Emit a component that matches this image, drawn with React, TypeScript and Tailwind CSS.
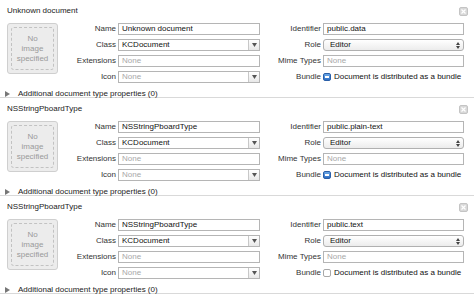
import React from "react";

const font = { fontFamily: '"Liberation Sans", Arial, sans-serif' };

function Field({ value, placeholder }: { value?: string; placeholder?: string }) {
  return (
    <div className="h-[12px] w-full border border-[#b5b5b5] bg-white flex items-center pl-[3px] text-[8px] leading-none whitespace-nowrap">
      {value ? <span className="text-[#111]">{value}</span> : <span className="text-[#a8a8a8]">{placeholder}</span>}
    </div>
  );
}

function Combo({ value, placeholder }: { value?: string; placeholder?: string }) {
  return (
    <div className="h-[12px] w-full border border-[#b5b5b5] bg-white flex items-stretch text-[8px] leading-none whitespace-nowrap">
      <div className="flex-1 flex items-center pl-[3px]">
        {value ? <span className="text-[#111]">{value}</span> : <span className="text-[#a8a8a8]">{placeholder}</span>}
      </div>
      <div className="w-[11px] border-l border-[#c8c8c8] bg-gradient-to-b from-white to-[#e8e8e8] flex items-center justify-center">
        <svg width="5" height="4" viewBox="0 0 5 4"><path d="M0 0 L5 0 L2.5 4 Z" fill="#555" /></svg>
      </div>
    </div>
  );
}

function Popup({ value }: { value: string }) {
  return (
    <div className="h-[12px] w-full border border-[#b0b0b0] rounded-[3px] bg-gradient-to-b from-white to-[#ececec] flex items-center justify-between pl-[6px] pr-[3px] text-[8px] leading-none">
      <span className="text-[#111]">{value}</span>
      <svg width="4" height="7" viewBox="0 0 4 7"><path d="M0 3 L2 0 L4 3 Z M0 4 L2 7 L4 4 Z" fill="#444" /></svg>
    </div>
  );
}

function Label({ children }: { children: React.ReactNode }) {
  return <div className="text-right text-[8px] leading-none text-[#333] whitespace-nowrap">{children}</div>;
}

function Section({ title, name, identifier, checked }: { title: string; name: string; identifier: string; checked: boolean }) {
  return (
    <div className="relative h-[98px] border-b border-[#d9d9d9] bg-white">
      <div className="absolute right-[6px] top-[7px] w-[9px] h-[9px] rounded-[2px] bg-[#d8d8d8] border border-[#c4c4c4] flex items-center justify-center">
        <svg width="5" height="5" viewBox="0 0 5 5"><path d="M0.5 0.5 L4.5 4.5 M4.5 0.5 L0.5 4.5" stroke="#fff" strokeWidth="1.2" /></svg>
      </div>
      <div className="pl-[7px] pt-[6px] h-[23px] text-[8px] leading-[9px] text-[#222]">{title}</div>
      <div className="flex">
        <div className="ml-[7px] w-[51px] h-[51px] rounded-[3px] border border-[#cfcfcf] bg-[#ececec] p-[3px]">
          <div className="w-full h-full rounded-[3px] border border-dashed border-[#c2c2c2] flex items-center justify-center text-center text-[8px] leading-[10px] text-[#9a9a9a]">
            No<br />image<br />specified
          </div>
        </div>
        <div className="grid grid-cols-[58px_142px] gap-x-[2px] gap-y-[4px] items-center">
          <Label>Name</Label>
          <Field value={name} />
          <Label>Class</Label>
          <Combo value="KCDocument" />
          <Label>Extensions</Label>
          <Field placeholder="None" />
          <Label>Icon</Label>
          <Combo placeholder="None" />
        </div>
        <div className="grid grid-cols-[61px_141px] gap-x-[2px] gap-y-[4px] items-center content-start">
          <Label>Identifier</Label>
          <Field value={identifier} />
          <Label>Role</Label>
          <Popup value="Editor" />
          <Label>Mime Types</Label>
          <Field placeholder="None" />
          <Label>Bundle</Label>
          <div className="flex items-center gap-[3px] h-[12px] text-[8px] leading-none text-[#111] whitespace-nowrap">
            {checked ? (
              <div className="w-[8px] h-[8px] shrink-0 rounded-[2px] bg-gradient-to-b from-[#6aa8e8] to-[#2f6fc4] border border-[#2a5fa8] flex items-center justify-center">
                <div className="w-[4px] h-[1.5px] bg-white" />
              </div>
            ) : (
              <div className="w-[8px] h-[8px] shrink-0 rounded-[2px] bg-white border border-[#a8a8a8]" />
            )}
            <span>Document is distributed as a bundle</span>
          </div>
        </div>
      </div>
      <div className="flex items-center mt-[7px] pl-[5px] text-[8px] leading-none text-[#222]">
        <svg width="5" height="6" viewBox="0 0 5 6" className="mr-[8px]"><path d="M0 0 L5 3 L0 6 Z" fill="#777" /></svg>
        <span>Additional document type properties (0)</span>
      </div>
    </div>
  );
}

export default function App() {
  return (
    <div className="w-[474px] h-[297px] bg-white overflow-hidden" style={font}>
      <Section title="Unknown document" name="Unknown document" identifier="public.data" checked />
      <Section title="NSStringPboardType" name="NSStringPboardType" identifier="public.plain-text" checked />
      <Section title="NSStringPboardType" name="NSStringPboardType" identifier="public.text" checked={false} />
    </div>
  );
}
